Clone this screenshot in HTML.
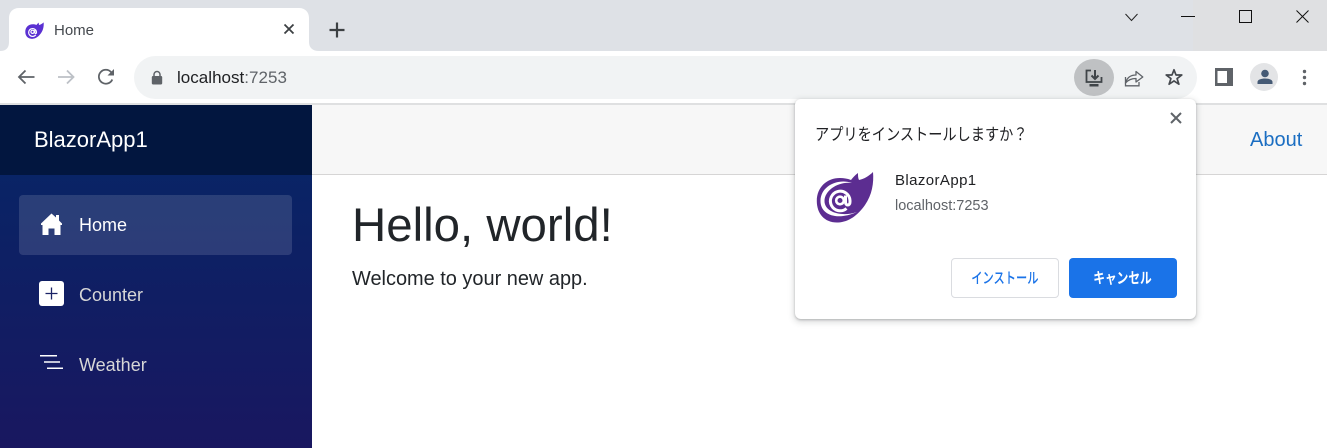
<!DOCTYPE html>
<html lang="ja"><head><meta charset="utf-8"><title>Home</title>
<style>
html,body{margin:0;padding:0;width:1327px;height:448px;overflow:hidden;background:#fff}
body{position:relative;font-family:"Liberation Sans","Noto Sans CJK JP",sans-serif}
.a{position:absolute;white-space:nowrap}
svg{position:absolute;display:block;overflow:visible}
.s{display:inline-block;transform-origin:50% 50%;position:relative;top:1px}
</style></head><body>
<div class="a" style="left:0;top:0;width:1327px;height:51px;background:#dee1e6"></div>
<div class="a" style="left:1193px;top:0;width:134px;height:51px;background:#dfe0e2"></div>
<svg style="left:0;top:0" width="330" height="52"><path d="M0 51C6 51 9 48 9 42V18C9 12 13 8 19 8H299C305 8 309 12 309 18V42C309 48 313 51 319 51Z" fill="#fff"/></svg>
<svg style="left:25px;top:22px" width="19" height="17" viewBox="0 0 58 52"><path d="M57 1C58 12 56 24 49 34C42 44 33 51 22 51.500C9 52 .8 43 .8 30C.8 16 11 7 24 7C28 7 31 7.500 35 9C37 6.500 39 4 42 2C42 5 42 7 43 9C48 8 53 5 57 1Z" fill="#5a30d2"/><path d="M33 39A12 12 0 1 1 35 30V32C35 36 30 36 30 32V24" fill="none" stroke="#fff" stroke-width="3.500"/><circle cx="23" cy="30" r="5" fill="none" stroke="#fff" stroke-width="3.500"/></svg>
<div class="a" style="left:54px;top:22px;font-size:15px;line-height:18px;color:#45494e">Home</div>
<svg style="left:283px;top:23px" width="12" height="12"><path d="M1.500 1.500L10.500 10.500M10.500 1.500L1.500 10.500" stroke="#3c4043" stroke-width="1.800"/></svg>
<svg style="left:329px;top:21.500px" width="16" height="16"><path d="M8 .5V15.500M.5 8H15.500" stroke="#3c4043" stroke-width="2.200"/></svg>
<svg style="left:1125px;top:12.500px" width="14" height="9"><path d="M.5 1L6.500 7.500L12.500 1" fill="none" stroke="#222" stroke-width="1"/></svg>
<div class="a" style="left:1181px;top:16px;width:14px;height:1px;background:#111"></div>
<div class="a" style="left:1239px;top:10px;width:11px;height:11px;border:1px solid #111"></div>
<svg style="left:1296px;top:10px" width="13" height="13"><path d="M.5 .5L12.500 12.500M12.500 .5L.5 12.500" stroke="#111" stroke-width="1"/></svg>
<svg style="left:17px;top:69px" width="19" height="16"><path d="M17.500 8H2M8.500 1.500L2 8L8.500 14.500" fill="none" stroke="#5f6368" stroke-width="1.800"/></svg>
<svg style="left:57px;top:69px" width="19" height="16"><path d="M1 8H16.500M10 1.500L16.500 8L10 14.500" fill="none" stroke="#bdc1c6" stroke-width="1.800"/></svg>
<svg style="left:97px;top:68px" width="19" height="18" viewBox="0 0 19 18"><path d="M15.300 11.500A7 7 0 1 1 14.200 4.200L16 6" fill="none" stroke="#5f6368" stroke-width="1.800"/><path d="M17 1V7.500H10.500Z" fill="#5f6368"/></svg>
<div class="a" style="left:134px;top:56px;width:1063px;height:43px;border-radius:22px;background:#f1f3f4"></div>
<svg style="left:151px;top:70px" width="12" height="15"><path d="M3 6.500V4.500A3 3 0 0 1 9 4.500V6.500" fill="none" stroke="#5f6368" stroke-width="1.500"/><rect x=".8" y="6" width="10.400" height="8.500" rx="1.200" fill="#5f6368"/></svg>
<div class="a" style="left:177px;top:67px;font-size:17px;line-height:22px;color:#202124;letter-spacing:.02px">localhost<span style="color:#5f6368">:7253</span></div>
<div class="a" style="left:1074px;top:59px;width:40px;height:37px;border-radius:50%;background:#bfc1c3"></div>
<svg style="left:1085px;top:69px" width="19" height="19" viewBox="0 0 19 19"><path d="M6 1.500H1.500V13H16.500V8" fill="none" stroke="#3f4448" stroke-width="1.800"/><path d="M10 1V9M6.500 6.500L10 10L13.500 6.500" fill="none" stroke="#3f4448" stroke-width="2"/><path d="M4.500 15H13.500V17.500H4.500Z" fill="#3f4448"/></svg>
<svg style="left:1124px;top:69px" width="20" height="18" viewBox="0 0 20 18"><path d="M1.500 8V16.800H15V13" fill="none" stroke="#5f6368" stroke-width="1.300"/><path d="M1.500 14C3 8.500 7 6 12 6V2.500L18.800 8L12 13V9.500C8 9.500 4.500 10.500 1.500 14Z" fill="none" stroke="#5f6368" stroke-width="1.300" stroke-linejoin="round"/></svg>
<svg style="left:1165px;top:68px" width="18" height="18" viewBox="0 0 18 18"><path d="M9 1.800L11 7H16.800L12.100 10.600L13.900 16.200L9 12.900L4.100 16.200L5.900 10.600L1.200 7H7Z" fill="none" stroke="#45494e" stroke-width="1.700" stroke-linejoin="round"/></svg>
<svg style="left:1215px;top:68px" width="18" height="18"><rect width="18" height="18" fill="#5f6368"/><rect x="2.500" y="3" width="9.500" height="12" fill="#fff"/></svg>
<div class="a" style="left:1250px;top:63px;width:28px;height:28px;border-radius:50%;background:#e3e4e6"></div>
<svg style="left:1256.500px;top:69px" width="16" height="16"><circle cx="8" cy="4.500" r="3.800" fill="#455a75"/><path d="M.5 15V13C.5 10.500 4.500 9.500 8 9.500C11.500 9.500 15.500 10.500 15.500 13V15Z" fill="#455a75"/></svg>
<svg style="left:1301.500px;top:68.500px" width="5" height="17"><circle cx="2.500" cy="2.500" r="1.700" fill="#5f6368"/><circle cx="2.500" cy="8.500" r="1.700" fill="#5f6368"/><circle cx="2.500" cy="14.500" r="1.700" fill="#5f6368"/></svg>
<div class="a" style="left:0;top:103px;width:1327px;height:2px;background:#dfe0e1"></div>

<div class="a" style="left:0;top:105px;width:312px;height:343px;background:linear-gradient(180deg,#052767 0%,#191760 100%)"></div>
<div class="a" style="left:0;top:105px;width:312px;height:70px;background:#02163f"></div>
<div class="a" style="left:34px;top:127px;font-size:22px;line-height:26px;color:#fff">BlazorApp1</div>
<div class="a" style="left:19px;top:195px;width:273px;height:60px;border-radius:4px;background:rgba(255,255,255,.13)"></div>
<svg style="left:41px;top:213px" width="21" height="22" viewBox="0 0 21 22"><path d="M10.500 .5L15 4.500V2H18V7.500L21 10.500V12H19.500V22H13.500V15.500H7.500V22H1.500V12H0V10.500Z" fill="#fff"/></svg>
<div class="a" style="left:79px;top:214px;font-size:18px;line-height:22px;color:#fff">Home</div>
<svg style="left:39px;top:281px" width="25" height="25"><rect width="25" height="25" rx="3" fill="#fff"/><path d="M12.500 6.500V18.500M6.500 12.500H18.500" stroke="#1b2366" stroke-width="1.300"/></svg>
<div class="a" style="left:79px;top:284px;font-size:18px;line-height:22px;color:#d7d7d7">Counter</div>
<svg style="left:40px;top:355px" width="24" height="14"><path d="M0 .75H17M4 7H20M7 13.250H23" stroke="#fff" stroke-width="1.500"/></svg>
<div class="a" style="left:79px;top:354px;font-size:18px;line-height:22px;color:#d7d7d7">Weather</div>

<div class="a" style="left:312px;top:105px;width:1015px;height:69px;background:#f7f7f7;border-bottom:1px solid #d6d5d5"></div>
<div class="a" style="left:1250px;top:128px;font-size:20px;line-height:24px;color:#1b6ec2">About</div>
<div class="a" style="left:352px;top:198px;font-size:47.400px;line-height:56px;color:#212529">Hello, world!</div>
<div class="a" style="left:352px;top:267px;font-size:19.950px;line-height:24px;color:#212529">Welcome to your new app.</div>

<div class="a" style="left:795px;top:99px;width:401px;height:220px;background:#fff;border-radius:6px;box-shadow:0 1px 2px rgba(60,64,67,.3),0 2px 6px 2px rgba(60,64,67,.15)"></div>
<svg style="left:1170px;top:112px" width="12" height="12"><path d="M1 1L11 11M11 1L1 11" stroke="#5f6368" stroke-width="2"/></svg>
<div class="a" style="left:815px;top:123px;font-size:16.500px;line-height:24px;color:#202124;transform:scaleX(.86);transform-origin:0 50%">アプリをインストールしますか？</div>
<svg style="left:816px;top:171px" width="58" height="52" viewBox="0 0 58 52"><path d="M57 1C58 12 56 24 49 34C42 44 33 51 22 51.500C9 52 .8 43 .8 30C.8 16 11 7 24 7C28 7 31 7.500 35 9C37 6.500 39 4 42 2C42 5 42 7 43 9C48 8 53 5 57 1Z" fill="#5c2d91"/><path d="M36 12C22 7 4.500 15 4.500 30C4.500 44 21 50 41 41C27 46 8.500 42 8.500 30C8.500 19 23 10 36 12Z" fill="#fff"/><path d="M30.500 37.500A9.800 9.800 0 1 1 34 29.500V31C34 35 29.500 35 29.500 31V24.500" fill="none" stroke="#fff" stroke-width="3"/><circle cx="24" cy="29.500" r="3.800" fill="none" stroke="#fff" stroke-width="2.600"/></svg>
<div class="a" style="left:895px;top:171px;font-size:15px;line-height:20px;color:#202124;letter-spacing:.4px">BlazorApp1</div>
<div class="a" style="left:895px;top:196px;font-size:14.500px;line-height:20px;color:#5f6368">localhost:7253</div>
<div class="a" style="left:951px;top:258px;width:106px;height:38px;border:1px solid #dadce0;border-radius:4px;text-align:center;font-size:15px;line-height:38px;color:#1a73e8;font-weight:500"><span class="s" style="transform:scaleX(.75)">インストール</span></div>
<div class="a" style="left:1069px;top:258px;width:108px;height:40px;background:#1a73e8;border-radius:4px;text-align:center;font-size:15px;line-height:40px;color:#fff;font-weight:700"><span class="s" style="transform:scaleX(.78)">キャンセル</span></div>
</body></html>
